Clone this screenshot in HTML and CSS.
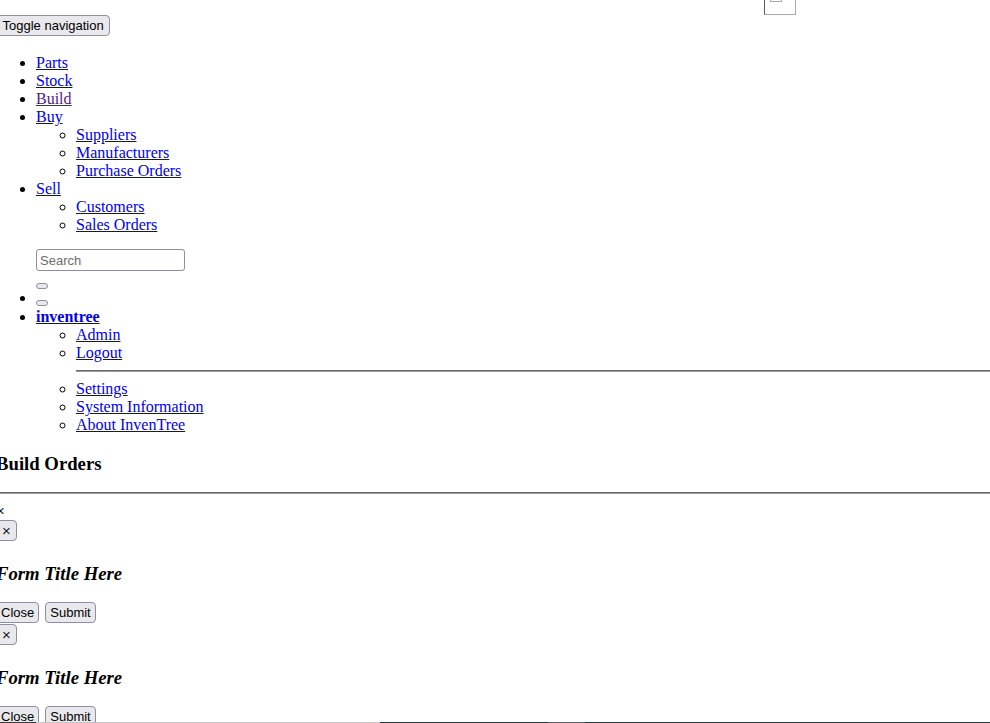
FILE: index.html
```html
<!DOCTYPE html>
<html lang="en">
<head>
<meta charset="utf-8">
<title>InvenTree | Build Orders</title>
<link rel="stylesheet" href="styles.css">
</head>
<body>
<div class="page">
  <nav class="navbar">
    <div class="header">
      <span class="brand"><span class="broken-icon"></span></span>
      <button class="btn toggle" type="button">Toggle navigation</button>
    </div>
    <ul class="nav main-nav">
      <li><a href="#">Parts</a></li>
      <li><a href="#">Stock</a></li>
      <li><a class="visited" href="#">Build</a></li>
      <li><a href="#">Buy</a>
        <ul class="sub">
          <li><a href="#">Suppliers</a></li>
          <li><a href="#">Manufacturers</a></li>
          <li><a href="#">Purchase Orders</a></li>
        </ul>
      </li>
      <li><a href="#">Sell</a>
        <ul class="sub">
          <li><a href="#">Customers</a></li>
          <li><a href="#">Sales Orders</a></li>
        </ul>
      </li>
    </ul>
    <form class="search">
      <input class="search-input" type="text" placeholder="Search">
      <button class="btn tiny search-btn" type="button"></button>
    </form>
    <ul class="nav right-nav">
      <li class="barcode-item"><button class="btn tiny" type="button"></button></li>
      <li><a class="user" href="#">inventree</a>
        <ul class="sub">
          <li><a href="#">Admin</a></li>
          <li><a href="#">Logout</a></li>
          <li class="divider"><hr class="rule"></li>
          <li><a href="#">Settings</a></li>
          <li><a href="#">System Information</a></li>
          <li><a href="#">About InvenTree</a></li>
        </ul>
      </li>
    </ul>
  </nav>

  <main class="content">
    <h3 class="title">Build Orders</h3>
    <hr class="rule">
    <div class="alert-x">×</div>

    <div class="modal">
      <div class="modal-head"><button class="btn close-btn" type="button">×</button></div>
      <h3 class="title modal-title"><em>Form Title Here</em></h3>
      <div class="modal-foot">
        <button class="btn" type="button">Close</button>
        <button class="btn" type="button">Submit</button>
      </div>
    </div>

    <div class="modal">
      <div class="modal-head"><button class="btn close-btn" type="button">×</button></div>
      <h3 class="title modal-title"><em>Form Title Here</em></h3>
      <div class="modal-foot">
        <button class="btn" type="button">Close</button>
        <button class="btn" type="button">Submit</button>
      </div>
    </div>
  </main>
</div>
<div class="edge-line"></div>
</body>
</html>
```

FILE: styles.css
```css
html, body {
  margin: 0;
  padding: 0;
  background: #ffffff;
  overflow: hidden;
}

body {
  font-family: "Liberation Serif", "Times New Roman", serif;
  font-size: 16px;
  line-height: 18px;
  color: #000000;
}

.page {
  margin-left: -4px;
}

a {
  color: #0000ee;
  text-decoration: underline;
}

a.visited {
  color: #551a8b;
}

a.user {
  font-weight: bold;
}

/* buttons */
.btn {
  font-family: "Liberation Sans", Arial, sans-serif;
  font-size: 13px;
  line-height: 17px;
  height: 21px;
  box-sizing: border-box;
  padding: 1px 4px;
  margin: 0;
  color: #000000;
  background: #e9e9ed;
  border: 1px solid #8f8f9d;
  border-radius: 4px;
}

.btn.toggle {
  padding: 1px 5.5px;
}

.btn.close-btn {
  font-size: 15px;
  padding: 1px 5px;
  color: #1a1a1a;
}

.btn.tiny {
  width: 12px;
  height: 6px;
  padding: 0;
  border-radius: 3px;
}

/* header */
.header {
  padding-top: 15px;
  height: 23px;
}

.header .btn {
  display: block;
}

.brand {
  float: right;
  box-sizing: content-box;
  width: 25px;
  height: 30px;
  margin: -32px 194px 0 0;
  padding-left: 5px;
  border: 1px solid #a9a9a9;
  border-left-color: #5a5a5a;
}

.broken-icon {
  display: block;
  width: 10px;
  height: 12px;
  margin-top: 4px;
  border: 1px solid #a9a9a9;
  background: #ffffff;
}

/* nav lists */
.nav {
  margin: 16px 0;
  padding-left: 40px;
  list-style: disc;
}

.main-nav {
  margin-bottom: 15px;
}

.sub {
  margin: 0;
  padding-left: 40px;
  list-style: circle;
}

.search {
  margin: 0;
  padding-left: 40px;
}

.search-input {
  display: block;
  box-sizing: border-box;
  width: 149px;
  height: 22px;
  margin: 0;
  padding: 0 3px;
  font-family: "Liberation Sans", Arial, sans-serif;
  font-size: 13px;
  border: 1px solid #8f8f9d;
  border-radius: 3px;
  background: #ffffff;
}

.search-input::placeholder {
  color: #6d6d6d;
}

.search-btn {
  display: block;
  margin-top: 12px;
}

.right-nav {
  margin: 0 0 16px 0;
}

.barcode-item {
  height: 19px;
}

.barcode-item .btn {
  vertical-align: top;
  margin-top: 11px;
}

.divider {
  list-style: none;
}

.rule {
  margin: 8px 0;
  height: 0;
  border: 0;
  border-top: 1px solid #6a6a6a;
  border-bottom: 1px solid #9a9a9a;
}

/* content */
.title {
  font-size: 18.72px;
  line-height: 21px;
  font-weight: bold;
  margin: 18.72px 0;
}

.alert-x {
  font-family: "Liberation Sans", Arial, sans-serif;
  font-size: 15px;
  line-height: 17px;
  color: #1a1a1a;
}

.modal-head {
  padding: 1px 0 2.5px;
}

.modal-head .btn {
  display: block;
}

.modal-foot {
  display: flex;
  gap: 6px;
}

.edge-line {
  position: fixed;
  left: 0;
  right: 0;
  bottom: 0;
  height: 1px;
  background: linear-gradient(to right,
    #3a3a3a 0, #3a3a3a 36px,
    #c6c6c6 36px, #c6c6c6 380px,
    #1f3b42 380px, #1f3b42 548px,
    #56646a 548px, #56646a 585px,
    #1f3b42 585px, #1f3b42 100%);
}
```
